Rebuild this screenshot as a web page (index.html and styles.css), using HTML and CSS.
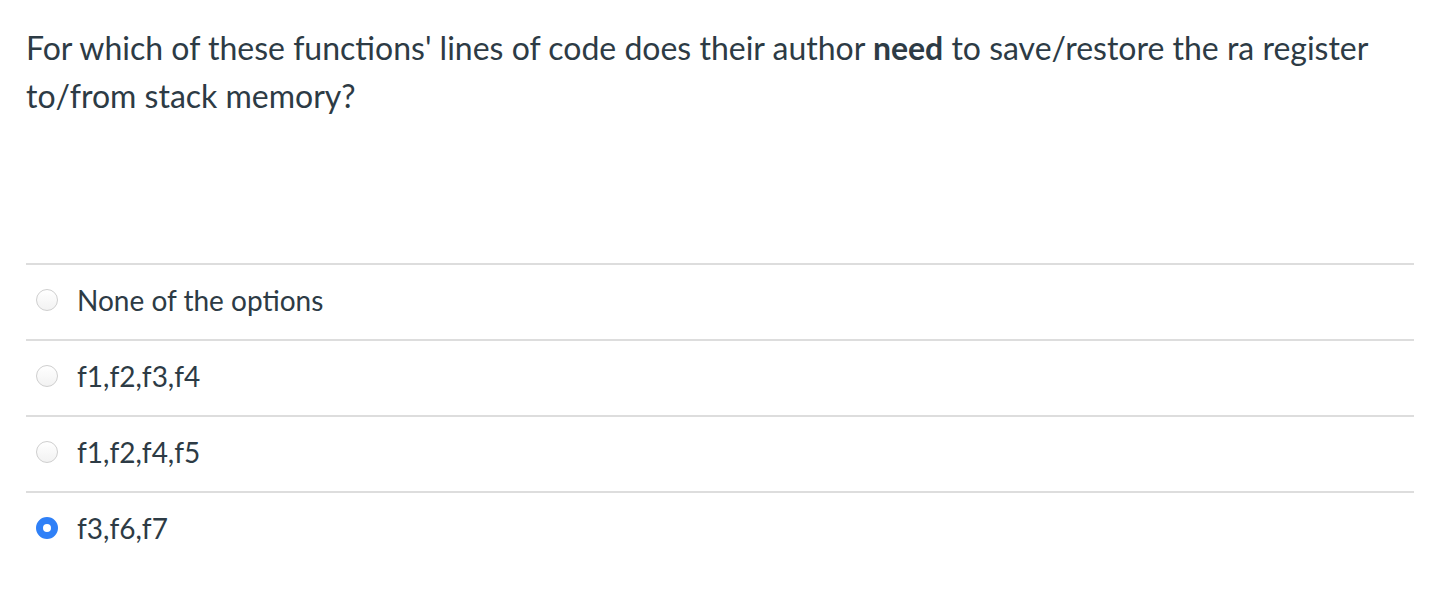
FILE: index.html
```html
<!DOCTYPE html>
<html>
<head>
<meta charset="utf-8">
<link rel="stylesheet" href="styles.css">
</head>
<body>
<div class="quiz">
  <div class="question">For which of these functions' lines of code does their author <strong>need</strong> to save/restore the ra register to/from stack memory?</div>
  <div class="answers">
    <label class="answer"><span class="radio"></span><span class="text">None of the options</span></label>
    <label class="answer"><span class="radio"></span><span class="text">f1,f2,f3,f4</span></label>
    <label class="answer"><span class="radio"></span><span class="text">f1,f2,f4,f5</span></label>
    <label class="answer"><span class="radio checked"></span><span class="text">f3,f6,f7</span></label>
  </div>
</div>
</body>
</html>
```
FILE: styles.css
```css
html, body {
  margin: 0;
  padding: 0;
  background: #fff;
}
body {
  font-family: Lato, "Open Sans", sans-serif;
  color: #2d3b45;
}
.quiz {
  padding: 24px 24px 0 26px;
}
.question {
  font-size: 32px;
  line-height: 48px;
  padding-right: 30px;
}
.question strong {
  font-weight: 700;
}
.answers {
  margin-top: 143px;
}
.answer {
  display: flex;
  align-items: center;
  gap: 19px;
  box-sizing: border-box;
  height: 76px;
  padding-bottom: 5px;
  border-top: 2px solid #dddddd;
  padding-left: 10px;
}
.radio {
  width: 22px;
  height: 22px;
  border-radius: 50%;
  border: 1px solid #cfcfcf;
  background: linear-gradient(#ffffff, #f2f2f2);
  box-sizing: border-box;
  flex: none;
}
.radio.checked {
  border: 7px solid #2f80f7;
  background: #fff;
}
.text {
  font-size: 28px;
}
```
